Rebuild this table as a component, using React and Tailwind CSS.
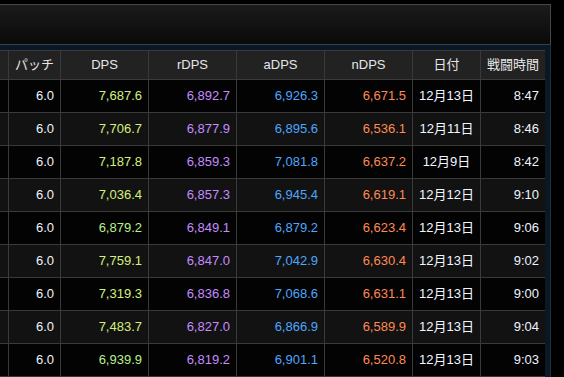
import React from 'react';

const rows = [
    ['6.0', '7,687.6', '6,892.7', '6,926.3', '6,671.5', '12月13日', '8:47'],
    ['6.0', '7,706.7', '6,877.9', '6,895.6', '6,536.1', '12月11日', '8:46'],
    ['6.0', '7,187.8', '6,859.3', '7,081.8', '6,637.2', '12月9日', '8:42'],
    ['6.0', '7,036.4', '6,857.3', '6,945.4', '6,619.1', '12月12日', '9:10'],
    ['6.0', '6,879.2', '6,849.1', '6,879.2', '6,623.4', '12月13日', '9:06'],
    ['6.0', '7,759.1', '6,847.0', '7,042.9', '6,630.4', '12月13日', '9:02'],
    ['6.0', '7,319.3', '6,836.8', '7,068.6', '6,631.1', '12月13日', '9:00'],
    ['6.0', '7,483.7', '6,827.0', '6,866.9', '6,589.9', '12月13日', '9:04'],
    ['6.0', '6,939.9', '6,819.2', '6,901.1', '6,520.8', '12月13日', '9:03'],
    // last row only peeks in at the bottom edge
    ['', '', '', '', '', '', ''],
];

const headers = ['', 'パッチ', 'DPS', 'rDPS', 'aDPS', 'nDPS', '日付', '戦闘時間'];

const dpsColor = (v) => (parseFloat(v.replace(',', '')) >= 7000 ? 'text-[#d4f07c]' : 'text-[#b8f08c]');

export default function App() {
    return (
        <div
            className="w-full h-[377px] overflow-hidden bg-black pt-[4px]"
            style={{ fontFamily: '"Liberation Sans", Arial, "Noto Sans CJK JP", sans-serif' }}
        >
            <div className="w-[551px]">
                <div className="h-[40px] border-t border-r border-[#464646] bg-linear-to-b from-[#1b1b1b] to-[#0a0a0a]" />
                <div className="border-t border-r border-t-[#34414e] border-r-[#22303d] bg-[#0a1725] pt-[5px] pr-[5px] overflow-hidden">
                    <div className="ml-[-53px] grid grid-cols-[60px_51px_87px_87px_87px_87px_67px_64px] gap-px bg-[#3a3a3a] border border-[#3a3a3a] text-[13px]">
                        {headers.map((h, i) => (
                            <div key={i} className="h-[28px] bg-[#222222] text-[#e6e6e6] flex items-center justify-center">
                                {h}
                            </div>
                        ))}
                        {rows.map((r, ri) => {
                            const bg = ri % 2 === 0 ? 'bg-[#030303]' : 'bg-[#121212]';
                            return (
                                <React.Fragment key={ri}>
                                    <div className={`h-[32px] ${bg}`} />
                                    <div className={`h-[32px] ${bg} flex items-center justify-end pr-[6px] text-[#eef4ff]`}>{r[0]}</div>
                                    <div className={`h-[32px] ${bg} flex items-center justify-end pr-[6px] ${r[1] ? dpsColor(r[1]) : ''}`}>{r[1]}</div>
                                    <div className={`h-[32px] ${bg} flex items-center justify-end pr-[6px] text-[#c48cff]`}>{r[2]}</div>
                                    <div className={`h-[32px] ${bg} flex items-center justify-end pr-[6px] text-[#4ea6ff]`}>{r[3]}</div>
                                    <div className={`h-[32px] ${bg} flex items-center justify-end pr-[6px] text-[#ff8a52]`}>{r[4]}</div>
                                    <div className={`h-[32px] ${bg} flex items-center justify-center text-[#f2f6ff]`}>{r[5]}</div>
                                    <div className={`h-[32px] ${bg} flex items-center justify-end pr-[6px] text-[#eef4ff]`}>{r[6]}</div>
                                </React.Fragment>
                            );
                        })}
                    </div>
                </div>
            </div>
        </div>
    );
}
